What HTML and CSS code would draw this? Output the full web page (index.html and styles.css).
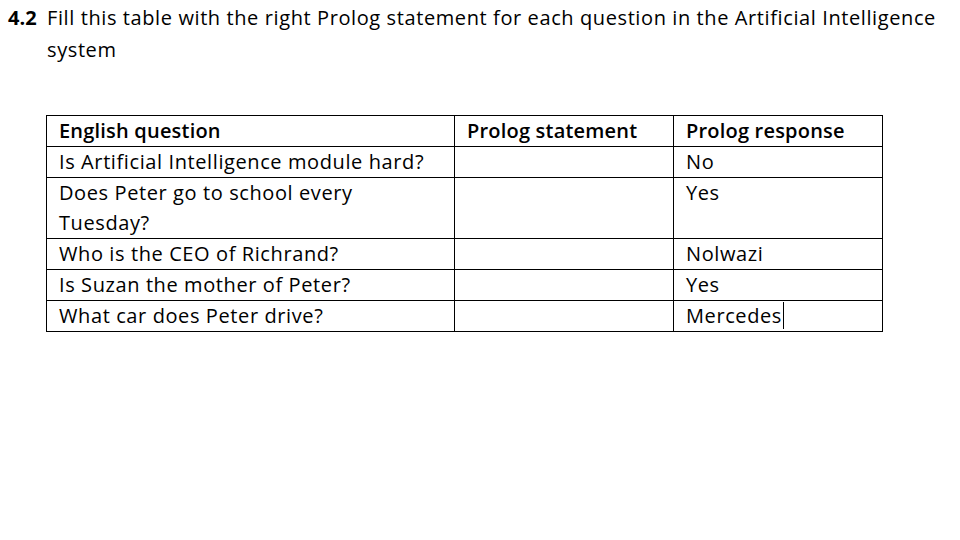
FILE: index.html
```html
<!DOCTYPE html>
<html>
<head>
<meta charset="utf-8">
<link rel="stylesheet" href="styles.css">
</head>
<body>
<div class="question">
  <div class="num">4.2</div>
  <div class="qtext">Fill this table with the right Prolog statement for each question in the Artificial Intelligence system</div>
</div>
<table class="grid">
  <colgroup>
    <col class="c1"><col class="c2"><col class="c3">
  </colgroup>
  <thead>
    <tr class="r1"><th>English question</th><th>Prolog statement</th><th>Prolog response</th></tr>
  </thead>
  <tbody>
    <tr class="r1"><td>Is Artificial Intelligence module hard?</td><td></td><td>No</td></tr>
    <tr class="r2"><td>Does Peter go to school every<br>Tuesday?</td><td></td><td>Yes</td></tr>
    <tr class="r1"><td>Who is the CEO of Richrand?</td><td></td><td>Nolwazi</td></tr>
    <tr class="r1"><td>Is Suzan the mother of Peter?</td><td></td><td>Yes</td></tr>
    <tr class="r1"><td>What car does Peter drive?</td><td></td><td><span class="caret">Mercedes</span></td></tr>
  </tbody>
</table>
</body>
</html>
```
FILE: styles.css
```css
html, body {
  margin: 0;
  padding: 0;
  background: #fff;
}
body {
  font-family: "Open Sans", Lato, sans-serif;
  font-size: 20px;
  letter-spacing: 0.6px;
  color: #000;
}
.question {
  display: flex;
  padding-top: 2px;
  line-height: 32px;
}
.num {
  width: 47px;
  padding-left: 8px;
  box-sizing: border-box;
  font-weight: bold;
  letter-spacing: 0;
  flex: none;
}
.qtext {
  width: 895px;
}
.grid {
  border-collapse: collapse;
  margin-top: 49px;
  margin-left: 46px;
  table-layout: fixed;
  width: 836px;
}
.c1 { width: 408px; }
.c2 { width: 219px; }
.c3 { width: 209px; }
.grid th, .grid td {
  border: 1px solid #000;
  padding: 0 0 0 12px;
  text-align: left;
  vertical-align: top;
  line-height: 30px;
}
.grid th {
  font-weight: 600;
  letter-spacing: 0.2px;
}
.grid .r1 th, .grid .r1 td { height: 30px; }
.caret {
  border-right: 1px solid #000;
  padding-right: 1px;
}
```
